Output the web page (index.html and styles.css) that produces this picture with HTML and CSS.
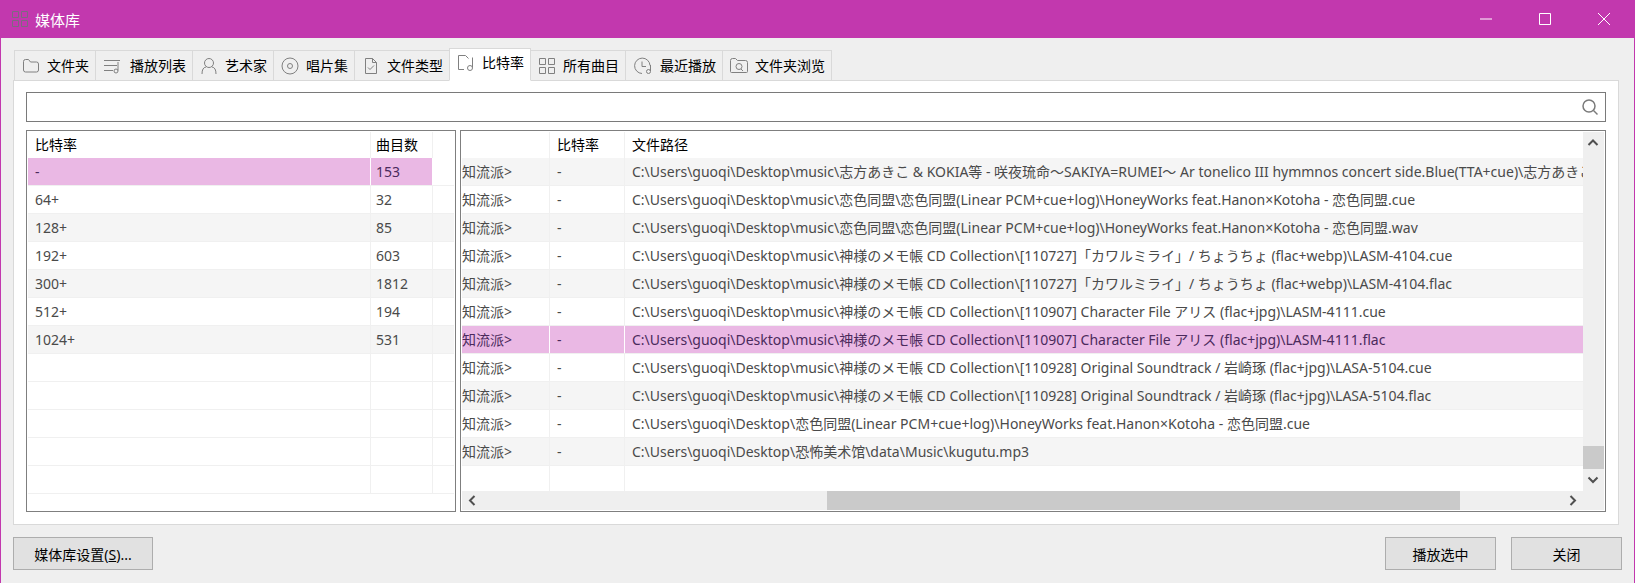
FILE: index.html
```html
<!DOCTYPE html>
<html lang="zh-CN">
<head>
    <meta charset="UTF-8">
    <meta name="viewport" content="width=device-width, initial-scale=1.0">
    <title>媒体库</title>
    <link rel="stylesheet" href="styles.css">
</head>
<body>
<div class="window">
    <div class="titlebar">
        <svg class="app-icon" width="16" height="16" viewBox="0 0 16 16"><path d="M.5.5h6v6h-6zM9.500.5h6v6h-6zM.5 9.500h6v6h-6zM9.500 9.500h6v6h-6z"/></svg>
        <span class="title">媒体库</span>
        <div class="controls">
            <svg width="14" height="14" viewBox="0 0 14 14"><path d="M1 7h12"/></svg>
            <svg width="14" height="14" viewBox="0 0 14 14"><path d="M1.500 1.500h11v11h-11z"/></svg>
            <svg width="14" height="14" viewBox="0 0 14 14"><path d="M1 1l12 12M13 1L1 13"/></svg>
        </div>
    </div>

    <div class="content">
        <div class="tabs">
            <div class="tab"><svg width="18" height="18" viewBox="0 0 18 18"><path d="M1.500 4.500q0-2 2-2h3l2 2.500h6q2 0 2 2v6q0 2-2 2h-11q-2 0-2-2z"/></svg>文件夹</div>
            <div class="tab"><svg width="20" height="18" viewBox="0 0 20 18"><path d="M1 3.500h16M1 8.500h13M1 13.500h9M15 5v8.500"/><circle cx="13" cy="14" r="2"/></svg>播放列表</div>
            <div class="tab"><svg width="18" height="18" viewBox="0 0 18 18"><circle cx="9" cy="6" r="4.500"/><path d="M2 17q0-6.500 4-7M16 17q0-6.500-4-7"/></svg>艺术家</div>
            <div class="tab"><svg width="18" height="18" viewBox="0 0 18 18"><circle cx="9" cy="9" r="8"/><circle cx="9" cy="9" r="2.500"/></svg>唱片集</div>
            <div class="tab"><svg width="18" height="18" viewBox="0 0 18 18"><path d="M3.500 1.500h7l4 4v11h-11zM10.500 1.500v4h4M6 10.500l2 2 4-4"/></svg>文件类型</div>
            <div class="tab active"><svg width="18" height="18" viewBox="0 0 18 18"><path d="M7 15.500H1.500v-14h7l3 3M15.500 3.500v10"/><circle cx="13" cy="14" r="2.500"/></svg>比特率</div>
            <div class="tab"><svg width="18" height="18" viewBox="0 0 18 18"><path d="M1.500 1.500h6v6h-6zM10.500 1.500h6v6h-6zM1.500 10.500h6v6h-6zM10.500 10.500h6v6h-6z"/></svg>所有曲目</div>
            <div class="tab"><svg width="20" height="18" viewBox="0 0 20 18"><path d="M9 16.500a7.700 7.700 0 1 1 8-8M9 4.500v5h4M17.500 8v6"/><circle cx="15.500" cy="14.500" r="2"/></svg>最近播放</div>
            <div class="tab"><svg width="18" height="18" viewBox="0 0 18 18"><path d="M.5 3.500q0-2 2-2h3l2 2h8q2 0 2 2v9q0 1-1 1h-15q-1 0-1-1z"/><circle cx="9" cy="9.500" r="3"/><path d="M11 12l2 2"/></svg>文件夹浏览</div>
        </div>

        <div class="panel">
            <div class="search">
                <svg width="18" height="18" viewBox="0 0 18 18"><circle cx="8" cy="8" r="6"/><path d="M12.500 12.500l4 4"/></svg>
            </div>
            <div class="lists">
                <div class="list list-left">
                    <div class="row head"><div class="cell">比特率</div><div class="cell">曲目数</div><div class="cell"></div></div>
                    <div class="row"><div class="cell sel">-</div><div class="cell sel num">153</div><div class="cell"></div></div>
                    <div class="row"><div class="cell">64+</div><div class="cell">32</div><div class="cell"></div></div>
                    <div class="row alt"><div class="cell">128+</div><div class="cell">85</div><div class="cell"></div></div>
                    <div class="row"><div class="cell">192+</div><div class="cell">603</div><div class="cell"></div></div>
                    <div class="row alt"><div class="cell">300+</div><div class="cell">1812</div><div class="cell"></div></div>
                    <div class="row"><div class="cell">512+</div><div class="cell">194</div><div class="cell"></div></div>
                    <div class="row alt"><div class="cell">1024+</div><div class="cell">531</div><div class="cell"></div></div>
                    <div class="row"><div class="cell"></div><div class="cell"></div><div class="cell"></div></div>
                    <div class="row"><div class="cell"></div><div class="cell"></div><div class="cell"></div></div>
                    <div class="row"><div class="cell"></div><div class="cell"></div><div class="cell"></div></div>
                    <div class="row"><div class="cell"></div><div class="cell"></div><div class="cell"></div></div>
                    <div class="row"><div class="cell"></div><div class="cell"></div><div class="cell"></div></div>
                </div>

                <div class="list list-right">
                    <div class="table">
                        <div class="row head"><div class="cell"></div><div class="cell">比特率</div><div class="cell">文件路径</div></div>
                        <div class="row alt"><div class="cell genre"><span>&lt;未知流派&gt;</span></div><div class="cell">-</div><div class="cell">C:\Users\guoqi\Desktop\music\志方あきこ &amp; KOKIA等 - 咲夜琉命～SAKIYA=RUMEI～ Ar tonelico III hymmnos concert side.Blue(TTA+cue)\志方あきこ</div></div>
                        <div class="row"><div class="cell genre"><span>&lt;未知流派&gt;</span></div><div class="cell">-</div><div class="cell">C:\Users\guoqi\Desktop\music\恋色同盟\恋色同盟(Linear PCM+cue+log)\HoneyWorks feat.Hanon×Kotoha - 恋色同盟.cue</div></div>
                        <div class="row alt"><div class="cell genre"><span>&lt;未知流派&gt;</span></div><div class="cell">-</div><div class="cell">C:\Users\guoqi\Desktop\music\恋色同盟\恋色同盟(Linear PCM+cue+log)\HoneyWorks feat.Hanon×Kotoha - 恋色同盟.wav</div></div>
                        <div class="row"><div class="cell genre"><span>&lt;未知流派&gt;</span></div><div class="cell">-</div><div class="cell">C:\Users\guoqi\Desktop\music\神様のメモ帳 CD Collection\[110727]「カワルミライ」/ ちょうちょ (flac+webp)\LASM-4104.cue</div></div>
                        <div class="row alt"><div class="cell genre"><span>&lt;未知流派&gt;</span></div><div class="cell">-</div><div class="cell">C:\Users\guoqi\Desktop\music\神様のメモ帳 CD Collection\[110727]「カワルミライ」/ ちょうちょ (flac+webp)\LASM-4104.flac</div></div>
                        <div class="row"><div class="cell genre"><span>&lt;未知流派&gt;</span></div><div class="cell">-</div><div class="cell">C:\Users\guoqi\Desktop\music\神様のメモ帳 CD Collection\[110907] Character File アリス (flac+jpg)\LASM-4111.cue</div></div>
                        <div class="row selected"><div class="cell genre"><span>&lt;未知流派&gt;</span></div><div class="cell">-</div><div class="cell">C:\Users\guoqi\Desktop\music\神様のメモ帳 CD Collection\[110907] Character File アリス (flac+jpg)\LASM-4111.flac</div></div>
                        <div class="row"><div class="cell genre"><span>&lt;未知流派&gt;</span></div><div class="cell">-</div><div class="cell">C:\Users\guoqi\Desktop\music\神様のメモ帳 CD Collection\[110928] Original Soundtrack / 岩崎琢 (flac+jpg)\LASA-5104.cue</div></div>
                        <div class="row alt"><div class="cell genre"><span>&lt;未知流派&gt;</span></div><div class="cell">-</div><div class="cell">C:\Users\guoqi\Desktop\music\神様のメモ帳 CD Collection\[110928] Original Soundtrack / 岩崎琢 (flac+jpg)\LASA-5104.flac</div></div>
                        <div class="row"><div class="cell genre"><span>&lt;未知流派&gt;</span></div><div class="cell">-</div><div class="cell">C:\Users\guoqi\Desktop\恋色同盟(Linear PCM+cue+log)\HoneyWorks feat.Hanon×Kotoha - 恋色同盟.cue</div></div>
                        <div class="row alt"><div class="cell genre"><span>&lt;未知流派&gt;</span></div><div class="cell">-</div><div class="cell">C:\Users\guoqi\Desktop\恐怖美术馆\data\Music\kugutu.mp3</div></div>
                        <div class="row"><div class="cell"></div><div class="cell"></div><div class="cell"></div></div>
                    </div>
                    <div class="vbar">
                        <svg class="arrow" width="20" height="22" viewBox="0 0 20 22"><path d="M5.500 13l4.500-4.500 4.500 4.500"/></svg>
                        <div class="vtrack"><div class="vthumb"></div></div>
                        <svg class="arrow" width="20" height="22" viewBox="0 0 20 22"><path d="M5.500 8.500l4.500 4.500 4.500-4.500"/></svg>
                    </div>
                    <div class="hbar">
                        <svg class="arrow" width="20" height="19" viewBox="0 0 20 19"><path d="M12.500 5l-4.500 4.500 4.500 4.500"/></svg>
                        <div class="htrack"><div class="hthumb"></div></div>
                        <svg class="arrow" width="20" height="19" viewBox="0 0 20 19"><path d="M7.500 5l4.500 4.500-4.500 4.500"/></svg>
                    </div>
                    <div class="corner"></div>
                </div>
            </div>
        </div>

        <div class="footer">
            <button class="btn btn-settings">媒体库设置(<u>S</u>)...</button>
            <div class="footer-right">
                <button class="btn">播放选中</button>
                <button class="btn">关闭</button>
            </div>
        </div>
    </div>
</div>
</body>
</html>
```

FILE: styles.css
```css
body {
    margin: 0;
    width: 1635px;
    height: 583px;
    overflow: hidden;
    font-family: "Noto Sans", "Noto Sans CJK SC", sans-serif;
    font-size: 14px;
    color: #000;
}
.window {
    height: 583px;
    box-sizing: border-box;
    display: flex;
    flex-direction: column;
    background-color: #efefef;
    border-left: 1px solid #c238ae;
    border-right: 1px solid #c238ae;
}

/* title bar */
.titlebar {
    height: 38px;
    flex: none;
    display: flex;
    align-items: center;
    padding-left: 11px;
    background-color: #c238ae;
    color: #fff;
}
.app-icon {
    fill: none;
    stroke: #7d6a80;
    margin-right: 7px;
}
.title {
    font-size: 15px;
}
.controls {
    margin-left: auto;
    display: flex;
    gap: 45px;
    padding-right: 23px;
    margin-top: -1px;
}
.controls svg {
    fill: none;
    stroke: #fff;
}

/* tabs */
.content {
    flex: 1;
    display: flex;
    flex-direction: column;
    padding: 10px 12px 13px;
    min-height: 0;
}
.tabs {
    display: flex;
    height: 33px;
    align-items: flex-end;
    padding-left: 1px;
    position: relative;
    z-index: 1;
    margin-bottom: -1px;
    box-sizing: border-box;
}
.tab {
    height: 31px;
    box-sizing: border-box;
    display: flex;
    align-items: center;
    gap: 7px;
    padding: 0 6px 0 7px;
    background-color: #efefef;
    border: 1px solid #d9d9d9;
    border-left: 1px solid #d9d9d9;
    margin-right: -1px;
    white-space: nowrap;
    line-height: 20px;
}
.tab svg {
    fill: none;
    stroke: #808080;
    flex: none;
}
.tab.active {
    height: 33px;
    background-color: #fff;
    border-bottom-color: #fff;
    position: relative;
    z-index: 1;
    padding-bottom: 3px;
}

/* panel */
.panel {
    flex: 1;
    min-height: 0;
    display: flex;
    flex-direction: column;
    gap: 8px;
    padding: 11px 12px 12px;
    background-color: #fff;
    border: 1px solid #d9d9d9;
    margin-right: 3px;
}
.search {
    height: 30px;
    flex: none;
    box-sizing: border-box;
    border: 1px solid #7a7a7a;
    display: flex;
    align-items: center;
    justify-content: flex-end;
    padding-right: 6px;
}
.search svg {
    fill: none;
    stroke: #7a7a7a;
    stroke-width: 1.5;
}
.lists {
    flex: 1;
    min-height: 0;
    display: flex;
    gap: 4px;
}
.list {
    box-sizing: border-box;
    border: 1px solid #7f7f7f;
    padding: 1px;
    overflow: hidden;
    color: #4a4a4a;
}
.list-left {
    width: 430px;
    flex: none;
}
.list-left .row {
    grid-template-columns: 343px 62px 1fr;
}
.list-right {
    flex: 1;
    min-width: 0;
    display: grid;
    grid-template-columns: 1fr 21px;
    grid-template-rows: 1fr 19px;
}
.list-right .row {
    grid-template-columns: 88px 75px 1fr;
}
.table {
    min-width: 0;
    min-height: 0;
    overflow: hidden;
}

/* rows */
.row {
    display: grid;
    height: 28px;
    box-sizing: border-box;
    border-bottom: 1px solid #f0f0f0;
}
.row.head {
    height: 26px;
    border-bottom: 0;
    color: #000;
}
.row.alt {
    background-color: #f5f5f5;
}
.row.selected,
.cell.sel {
    background-color: #eab8e4;
    color: #4b2a5c;
}
.cell {
    box-sizing: border-box;
    padding: 0 0 0 7px;
    border-right: 1px solid #f0f0f0;
    line-height: 27px;
    white-space: nowrap;
    overflow: hidden;
    min-width: 0;
}
.row.selected .cell,
.cell.sel {
    border-right-color: #fff;
}
.head .cell {
    line-height: 26px;
}
.row .cell:last-child {
    border-right: 0;
}
.list-left .cell:nth-child(2) {
    padding-left: 5px;
}
.list-left .head .cell:nth-child(2) {
    padding-left: 5px;
}
.genre {
    display: flex;
    justify-content: flex-end;
    padding: 0 37px 0 0;
}
.genre span {
    flex: none;
}

/* scrollbars */
.vbar {
    display: flex;
    flex-direction: column;
    background-color: #efefef;
    min-height: 0;
}
.hbar {
    display: flex;
    background-color: #efefef;
    min-width: 0;
}
.arrow {
    flex: none;
    fill: none;
    stroke: #505050;
    stroke-width: 2;
}
.vtrack {
    flex: 1;
    display: flex;
    flex-direction: column;
    justify-content: flex-end;
}
.vthumb {
    height: 23px;
    background-color: #cacaca;
}
.htrack {
    flex: 1;
    display: flex;
}
.hthumb {
    width: 633px;
    margin-left: 345px;
    background-color: #cacaca;
}
.corner {
    background-color: #efefef;
}

/* footer */
.footer {
    flex: none;
    display: flex;
    justify-content: space-between;
    margin-top: 12px;
    margin-right: 0;
}
.footer-right {
    display: flex;
    gap: 15px;
}
.btn {
    width: 111px;
    height: 33px;
    font: inherit;
    color: #000;
    background-color: #e1e1e1;
    border: 1px solid #adadad;
    padding: 0;
}
.btn-settings {
    width: 140px;
    margin-left: 0;
}
```
